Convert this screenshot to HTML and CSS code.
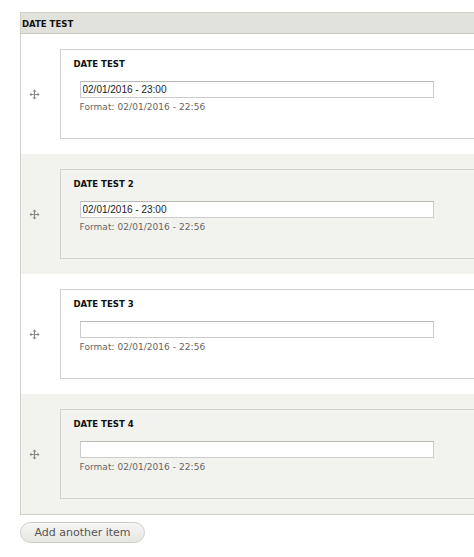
FILE: index.html
```html
<!DOCTYPE html>
<html lang="en">
<head>
    <meta charset="UTF-8">
    <meta name="viewport" content="width=device-width, initial-scale=1.0">
    <title>Date test</title>
    <link rel="stylesheet" href="styles.css">
</head>
<body>
    <!-- Multiple value field -->
    <div class="field-multiple">
        <table class="field-table">
            <thead>
                <tr>
                    <th colspan="2">DATE TEST</th>
                </tr>
            </thead>
            <tbody>
                <tr class="odd">
                    <td class="handle-cell">
                        <svg class="handle" width="11" height="11" viewBox="0 0 11 11"><path d="M5.5 1v9M1 5.5h9" stroke="#8a8a8a" stroke-width="1.2"/><path d="M5.5 0.5l-2 2h4zM5.5 10.5l-2-2h4zM0.5 5.5l2-2v4zM10.5 5.5l-2-2v4z" fill="#8a8a8a"/></svg>
                    </td>
                    <td class="item-cell">
                        <div class="date-box">
                            <div class="date-title">DATE TEST</div>
                            <div class="date-field">
                                <input class="date-input" type="text" value="02/01/2016 - 23:00">
                                <div class="description">Format: 02/01/2016 - 22:56</div>
                            </div>
                        </div>
                    </td>
                </tr>
                <tr class="even">
                    <td class="handle-cell">
                        <svg class="handle" width="11" height="11" viewBox="0 0 11 11"><path d="M5.5 1v9M1 5.5h9" stroke="#8a8a8a" stroke-width="1.2"/><path d="M5.5 0.5l-2 2h4zM5.5 10.5l-2-2h4zM0.5 5.5l2-2v4zM10.5 5.5l-2-2v4z" fill="#8a8a8a"/></svg>
                    </td>
                    <td class="item-cell">
                        <div class="date-box">
                            <div class="date-title">DATE TEST 2</div>
                            <div class="date-field">
                                <input class="date-input" type="text" value="02/01/2016 - 23:00">
                                <div class="description">Format: 02/01/2016 - 22:56</div>
                            </div>
                        </div>
                    </td>
                </tr>
                <tr class="odd">
                    <td class="handle-cell">
                        <svg class="handle" width="11" height="11" viewBox="0 0 11 11"><path d="M5.5 1v9M1 5.5h9" stroke="#8a8a8a" stroke-width="1.2"/><path d="M5.5 0.5l-2 2h4zM5.5 10.5l-2-2h4zM0.5 5.5l2-2v4zM10.5 5.5l-2-2v4z" fill="#8a8a8a"/></svg>
                    </td>
                    <td class="item-cell">
                        <div class="date-box">
                            <div class="date-title">DATE TEST 3</div>
                            <div class="date-field">
                                <input class="date-input" type="text" value="">
                                <div class="description">Format: 02/01/2016 - 22:56</div>
                            </div>
                        </div>
                    </td>
                </tr>
                <tr class="even">
                    <td class="handle-cell">
                        <svg class="handle" width="11" height="11" viewBox="0 0 11 11"><path d="M5.5 1v9M1 5.5h9" stroke="#8a8a8a" stroke-width="1.2"/><path d="M5.5 0.5l-2 2h4zM5.5 10.5l-2-2h4zM0.5 5.5l2-2v4zM10.5 5.5l-2-2v4z" fill="#8a8a8a"/></svg>
                    </td>
                    <td class="item-cell">
                        <div class="date-box">
                            <div class="date-title">DATE TEST 4</div>
                            <div class="date-field">
                                <input class="date-input" type="text" value="">
                                <div class="description">Format: 02/01/2016 - 22:56</div>
                            </div>
                        </div>
                    </td>
                </tr>
            </tbody>
        </table>
        <button class="add-more" type="button">Add another item</button>
    </div>
</body>
</html>
```

FILE: styles.css
```css
html {
    overflow: hidden;
}

body {
    margin: 0;
    padding: 0;
    background: #fff;
    font-family: "DejaVu Sans", Verdana, sans-serif;
    color: #222;
}

.field-multiple {
    padding: 12px 0 0 20px;
}

/* Table */
.field-table {
    width: 454px;
    border-collapse: collapse;
    border-left: 1px solid #d0d0cc;
    border-bottom: 1px solid #d0d0cc;
}

.field-table th {
    background-color: #e1e2dc;
    border-top: 1px solid #cfcfca;
    border-bottom: 1px solid #c8c8c3;
    text-align: left;
    padding: 0 0 0 1px;
    height: 20px;
    font-family: "DejaVu Sans Condensed", "DejaVu Sans", sans-serif;
    font-weight: bold;
    font-size: 9.5px;
    color: #111;
}

.field-table td {
    padding: 15px 0;
    vertical-align: middle;
}

.field-table tr.odd td {
    background-color: #fff;
}

.field-table tr.even td {
    background-color: #f2f2ee;
}

.handle-cell {
    width: 39px;
    box-sizing: border-box;
}

.handle {
    display: block;
    margin-left: 8px;
}

/* Fieldset-like box, its right side runs out of the frame */
.date-box {
    border: 1px solid #d2d2cd;
    border-right: none;
    height: 81px;
    padding: 7px 0 0 13px;
}

.date-title {
    font-family: "DejaVu Sans Condensed", "DejaVu Sans", sans-serif;
    font-weight: bold;
    font-size: 9.5px;
    line-height: 14px;
    color: #111;
}

.date-field {
    margin: 10px 0 0 6px;
}

.date-input {
    display: block;
    box-sizing: border-box;
    width: 354px;
    height: 17px;
    margin: 0;
    padding: 0 2px;
    border: 1px solid #ccc;
    border-top-color: #b8b8b4;
    background: #fff;
    font-family: "Liberation Sans", Arial, sans-serif;
    font-size: 10px;
    color: #222;
    outline: none;
}

.description {
    margin-top: 3px;
    font-size: 9px;
    line-height: 12px;
    color: #666;
    letter-spacing: 0.05px;
}

/* Add more button */
.add-more {
    display: block;
    margin: 7px 0 0 0;
    width: 125px;
    height: 21px;
    padding: 0;
    border: 1px solid #cdcdc8;
    border-radius: 11px;
    background: linear-gradient(#f6f6f4, #e6e6e2);
    font-family: "DejaVu Sans", Verdana, sans-serif;
    font-size: 11px;
    color: #555;
    cursor: pointer;
}
```
